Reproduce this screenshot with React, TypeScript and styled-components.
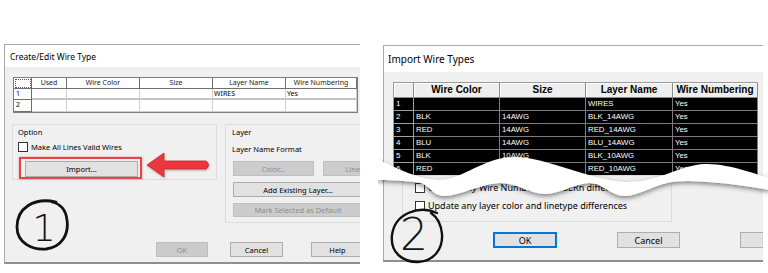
import React from "react";
import styled, { createGlobalStyle } from "styled-components";

const Global = createGlobalStyle`
  html, body { margin: 0; padding: 0; background: #ffffff; }
  body {
    width: 768px; height: 273px; overflow: hidden;
    font-family: "Noto Sans", "Open Sans", sans-serif;
    color: #000;
  }
`;

const Page = styled.div`
  position: relative;
  width: 768px;
  height: 273px;
  box-sizing: border-box;
  padding: 44px 0 0 4px;
  display: flex;
  align-items: flex-start;
  gap: 23px;
  background: #fff;
`;

/* ---------- generic dialog ---------- */
const Dialog = styled.div<{ $w: number; $h: number; $top: number }>`
  position: relative;
  width: ${(p) => p.$w}px;
  height: ${(p) => p.$h}px;
  margin-top: ${(p) => p.$top}px;
  box-sizing: border-box;
  border: 1px solid #a9a9a9;
  border-right: none;
  border-bottom: 2px solid #8f8f8f;
  background: #f0f0f0;
  overflow: hidden;
  display: flex;
  flex-direction: column;
`;

const TitleBar = styled.div<{ $h: number; $size: number; $pad: number }>`
  height: ${(p) => p.$h}px;
  flex-shrink: 0;
  background: #fff;
  display: flex;
  align-items: center;
  padding-left: ${(p) => p.$pad}px;
  font-size: ${(p) => p.$size}px;
  color: #000;
  white-space: nowrap;
`;

const Body = styled.div<{ $pad: string }>`
  display: flex;
  flex-direction: column;
  align-items: flex-start;
  padding: ${(p) => p.$pad};
  min-width: 430px;
`;

/* ---------- left table ---------- */
const LeftGrid = styled.div`
  display: grid;
  grid-template-columns: 18px 35px 73px 73px 73px 71px;
  grid-template-rows: 11px 11px 12px;
  border: 1px solid #7d7d7d;
  background: #fff;
`;

const LHead = styled.div<{ $corner?: boolean }>`
  box-sizing: border-box;
  border-right: 1px solid #6f6f6f;
  border-bottom: 1px solid #6f6f6f;
  background: #fff;
  font-size: 7px;
  line-height: 10px;
  text-align: center;
  color: #222;
  white-space: nowrap;
  overflow: hidden;
  ${(p) => (p.$corner ? "outline: 1px dotted #555; outline-offset: -2px;" : "")}
`;

const LRowHead = styled.div`
  box-sizing: border-box;
  border-right: 1px solid #6f6f6f;
  border-bottom: 1px solid #6f6f6f;
  font-size: 7px;
  line-height: 10px;
  padding-left: 2px;
  background: #fff;
`;

const LCell = styled.div<{ $thick?: boolean }>`
  box-sizing: border-box;
  border-right: 1px solid #cfcfcf;
  border-bottom: ${(p) => (p.$thick ? "2px solid #c4c4c4" : "1px solid #cfcfcf")};
  font-size: 7px;
  line-height: 10px;
  padding-left: 1px;
  white-space: nowrap;
`;

/* ---------- group boxes ---------- */
const GroupsRow = styled.div`
  display: flex;
  align-items: flex-start;
  gap: 8px;
  margin: 11px 0 0 -1px;
`;

const Group = styled.div<{ $w: number; $h: number; $pad: string; $ml?: number; $mt?: number }>`
  box-sizing: border-box;
  width: ${(p) => p.$w}px;
  height: ${(p) => p.$h}px;
  margin-left: ${(p) => p.$ml ?? 0}px;
  margin-top: ${(p) => p.$mt ?? 0}px;
  border: 1px solid #dcdcdc;
  padding: ${(p) => p.$pad};
  display: flex;
  flex-direction: column;
  align-items: flex-start;
`;

const GroupLabel = styled.div<{ $size: number }>`
  font-size: ${(p) => p.$size}px;
  line-height: 10px;
  color: #000;
  white-space: nowrap;
`;

const CheckRow = styled.label<{ $size: number; $mt: number }>`
  display: flex;
  align-items: center;
  gap: 3px;
  margin-top: ${(p) => p.$mt}px;
  font-size: ${(p) => p.$size}px;
  line-height: 10px;
  white-space: nowrap;
`;

const Box = styled.span`
  width: 10px;
  height: 10px;
  box-sizing: border-box;
  border: 1px solid #333;
  background: #fff;
  flex-shrink: 0;
`;

const Highlight = styled.div`
  margin: 5px 0 0 1px;
  width: 123px;
  height: 24px;
  box-sizing: border-box;
  border: 2px solid #e8454a;
  box-shadow: 0 0 2px rgba(232, 60, 66, 0.55);
  padding: 2px 2px 0 4px;
`;

const Button = styled.div<{
  $w: number;
  $h: number;
  $size: number;
  $disabled?: boolean;
  $focus?: boolean;
  $ml?: number;
}>`
  box-sizing: border-box;
  width: ${(p) => p.$w}px;
  height: ${(p) => p.$h}px;
  margin-left: ${(p) => p.$ml ?? 0}px;
  flex-shrink: 0;
  display: flex;
  align-items: center;
  justify-content: center;
  font-size: ${(p) => p.$size}px;
  white-space: nowrap;
  overflow: hidden;
  background: ${(p) => (p.$disabled ? "#cccccc" : "#e1e1e1")};
  color: ${(p) => (p.$disabled ? "#8d8d8d" : "#000")};
  border: 1px solid
    ${(p) => (p.$focus ? "#0078d7" : p.$disabled ? "#bfbfbf" : "#adadad")};
  ${(p) => (p.$focus ? "box-shadow: inset 0 0 0 1px #0078d7;" : "")}
`;

const FieldRow = styled.div`
  display: flex;
  align-items: center;
  margin-top: 4px;
`;

const FieldLabel = styled.div`
  width: 128px;
  font-size: 7.5px;
  white-space: nowrap;
`;

const Input = styled.div`
  width: 90px;
  height: 15px;
  box-sizing: border-box;
  border: 1px solid #7a7a7a;
  background: #fff;
`;

const BtnRow = styled.div<{ $mt: number; $pl: number; $gap: number }>`
  display: flex;
  gap: ${(p) => p.$gap}px;
  margin-top: ${(p) => p.$mt}px;
  padding-left: ${(p) => p.$pl}px;
`;

/* ---------- right table ---------- */
const RightGrid = styled.div`
  display: grid;
  grid-template-columns: 20px 86px 86px 87px 85px;
  grid-template-rows: 15px repeat(6, 13px);
  background: #000;
  border-left: 1px solid #9a9a9a;
  border-top: 1px solid #9a9a9a;
`;

const RHead = styled.div`
  box-sizing: border-box;
  background: #eeeeee;
  border-right: 1px solid #8a8a8a;
  border-bottom: 1px solid #8a8a8a;
  box-shadow: inset 1px 1px 0 #fff;
  font-family: "Liberation Sans", Arial, sans-serif;
  font-weight: bold;
  font-size: 10px;
  line-height: 13px;
  text-align: center;
  white-space: nowrap;
  overflow: hidden;
`;

const RRowHead = styled.div`
  box-sizing: border-box;
  background: #000;
  color: #fff;
  border-right: 1px solid #a0a0a0;
  border-bottom: 1px solid #a0a0a0;
  font-family: "Liberation Sans", Arial, sans-serif;
  font-size: 8px;
  line-height: 12px;
  padding-left: 2px;
`;

const RCell = styled.div`
  box-sizing: border-box;
  background: #000;
  color: #fff;
  border-right: 1px solid #7c7c7c;
  border-bottom: 1px solid #7c7c7c;
  font-family: "Liberation Sans", Arial, sans-serif;
  font-size: 7.8px;
  line-height: 12px;
  padding-left: 2px;
  white-space: nowrap;
  overflow: hidden;
`;

/* ---------- overlays ---------- */
const Overlay = styled.div<{ $x: number; $y: number; $w: number; $h: number }>`
  position: absolute;
  left: ${(p) => p.$x}px;
  top: ${(p) => p.$y}px;
  width: ${(p) => p.$w}px;
  height: ${(p) => p.$h}px;
  pointer-events: none;
`;

const Annotation = styled(Overlay)`
  display: flex;
  align-items: center;
  justify-content: center;
  & > svg {
    position: absolute;
    inset: 0;
  }
`;

const Digit = styled.span<{ $size: number; $dx: number; $dy: number }>`
  position: relative;
  left: ${(p) => p.$dx}px;
  top: ${(p) => p.$dy}px;
  font-family: "DejaVu Sans", "Liberation Sans", sans-serif;
  font-weight: 300;
  font-size: ${(p) => p.$size}px;
  line-height: 1;
  color: #141414;
`;

/* ---------- helpers ---------- */
type Pt = [number, number];
function segs(pts: Pt[]): string {
  let d = "";
  for (let i = 0; i < pts.length - 1; i++) {
    const p0 = pts[i - 1] || pts[i];
    const p1 = pts[i];
    const p2 = pts[i + 1];
    const p3 = pts[i + 2] || p2;
    const c1x = p1[0] + (p2[0] - p0[0]) / 6;
    const c1y = p1[1] + (p2[1] - p0[1]) / 6;
    const c2x = p2[0] - (p3[0] - p1[0]) / 6;
    const c2y = p2[1] - (p3[1] - p1[1]) / 6;
    d += ` C ${c1x.toFixed(1)} ${c1y.toFixed(1)}, ${c2x.toFixed(1)} ${c2y.toFixed(1)}, ${p2[0]} ${p2[1]}`;
  }
  return d;
}

const waveTop: Pt[] = [
  [0, 15], [62, 35], [137, 12], [247, 37], [327, 19], [392, 33],
];
const waveBottom: Pt[] = [
  [392, 45], [342, 38], [294, 37], [247, 51], [212, 38], [167, 49],
  [122, 38], [67, 51], [42, 38], [0, 35],
];
const wavePath =
  `M ${waveTop[0][0]} ${waveTop[0][1]}` +
  segs(waveTop) +
  ` L ${waveBottom[0][0]} ${waveBottom[0][1]}` +
  segs(waveBottom) +
  " Z";

const leftHeaders = ["", "Used", "Wire Color", "Size", "Layer Name", "Wire Numbering"];
const leftRows = [
  ["1", "", "", "", "WIRES", "Yes"],
  ["2", "", "", "", "", ""],
];

const rightHeaders = ["", "Wire Color", "Size", "Layer Name", "Wire Numbering"];
const rightRows = [
  ["1", "", "", "WIRES", "Yes"],
  ["2", "BLK", "14AWG", "BLK_14AWG", "Yes"],
  ["3", "RED", "14AWG", "RED_14AWG", "Yes"],
  ["4", "BLU", "14AWG", "BLU_14AWG", "Yes"],
  ["5", "BLK", "10AWG", "BLK_10AWG", "Yes"],
  ["6", "RED", "10AWG", "RED_10AWG", "Yes"],
];

export default function App() {
  return (
    <>
      <Global />
      <Page>
        {/* Left dialog */}
        <Dialog $w={356} $h={220} $top={0}>
          <TitleBar $h={22} $size={8.5} $pad={5}>Create/Edit Wire Type</TitleBar>
          <Body $pad="10px 0 0 8px">
            <LeftGrid>
              {leftHeaders.map((h, i) => (
                <LHead key={i} $corner={i === 0}>{h}</LHead>
              ))}
              {leftRows.map((r, ri) =>
                r.map((c, ci) =>
                  ci === 0 ? (
                    <LRowHead key={`${ri}-${ci}`}>{c}</LRowHead>
                  ) : (
                    <LCell key={`${ri}-${ci}`} $thick={ri === 0}>{c}</LCell>
                  )
                )
              )}
            </LeftGrid>
            <GroupsRow>
              <Group $w={205} $h={56} $pad="2px 0 0 5px">
                <GroupLabel $size={7.5}>Option</GroupLabel>
                <CheckRow $size={7.5} $mt={5}>
                  <Box />
                  Make All Lines Valid Wires
                </CheckRow>
                <Highlight>
                  <Button $w={113} $h={16} $size={7.5}>Import...</Button>
                </Highlight>
              </Group>
              <Group $w={200} $h={99} $pad="2px 0 0 6px">
                <GroupLabel $size={7.5}>Layer</GroupLabel>
                <FieldRow>
                  <FieldLabel>Layer Name Format</FieldLabel>
                  <Input />
                </FieldRow>
                <BtnRow $mt={5} $pl={1} $gap={9}>
                  <Button $w={81} $h={15} $size={7.5} $disabled>Color...</Button>
                  <Button $w={81} $h={15} $size={7.5} $disabled>Linetype...</Button>
                </BtnRow>
                <BtnRow $mt={6} $pl={1} $gap={0}>
                  <Button $w={130} $h={15} $size={7.5}>Add Existing Layer...</Button>
                </BtnRow>
                <BtnRow $mt={6} $pl={1} $gap={0}>
                  <Button $w={130} $h={14} $size={7.5} $disabled>Mark Selected as Default</Button>
                </BtnRow>
              </Group>
            </GroupsRow>
            <BtnRow $mt={19} $pl={143} $gap={22}>
              <Button $w={52} $h={15} $size={7.5} $disabled>OK</Button>
              <Button $w={53} $h={15} $size={7.5}>Cancel</Button>
              <Button $w={53} $h={15} $size={7.5} $ml={6}>Help</Button>
            </BtnRow>
          </Body>
        </Dialog>

        {/* Right dialog */}
        <Dialog $w={380} $h={217} $top={1}>
          <TitleBar $h={26} $size={10} $pad={4}>Import Wire Types</TitleBar>
          <Body $pad="10px 0 0 9px">
            <RightGrid>
              {rightHeaders.map((h, i) => (
                <RHead key={i}>{h}</RHead>
              ))}
              {rightRows.map((r, ri) =>
                r.map((c, ci) =>
                  ci === 0 ? (
                    <RRowHead key={`${ri}-${ci}`}>{c}</RRowHead>
                  ) : (
                    <RCell key={`${ri}-${ci}`}>{c}</RCell>
                  )
                )
              )}
            </RightGrid>
            <Group $w={270} $h={47} $pad="7px 0 0 12px" $ml={9} $mt={-1}>
              <CheckRow $size={9} $mt={0}>
                <Box />
                Update any Wire Number and USERn differences
              </CheckRow>
              <CheckRow $size={9} $mt={8}>
                <Box />
                Update any layer color and linetype differences
              </CheckRow>
            </Group>
            <BtnRow $mt={10} $pl={100} $gap={60}>
              <Button $w={64} $h={16} $size={9} $focus>OK</Button>
              <Button $w={63} $h={16} $size={9}>Cancel</Button>
              <Button $w={64} $h={16} $size={9}>Help</Button>
            </BtnRow>
          </Body>
        </Dialog>

        {/* torn wave across right dialog */}
        <Overlay $x={378} $y={145} $w={392} $h={62}>
          <svg width="392" height="62" viewBox="0 0 392 62">
            <defs>
              <filter id="wshadow" x="-5%" y="-40%" width="110%" height="180%">
                <feDropShadow dx="0" dy="2" stdDeviation="2.4" floodColor="#000" floodOpacity="0.5" />
              </filter>
            </defs>
            <path d={wavePath} fill="#ffffff" filter="url(#wshadow)" />
          </svg>
        </Overlay>

        {/* red arrow */}
        <Overlay $x={140} $y={148} $w={75} $h={34}>
          <svg width="75" height="34" viewBox="0 0 75 34">
            <defs>
              <filter id="ashadow" x="-20%" y="-30%" width="140%" height="160%">
                <feDropShadow dx="0.5" dy="1" stdDeviation="1" floodColor="#000" floodOpacity="0.3" />
              </filter>
            </defs>
            <path
              d="M 7 17 L 24 5 L 24 13 L 66 13 Q 71 17 66 21 L 24 21 L 24 29 Z"
              fill="#e9383d"
              stroke="#c9262b"
              strokeWidth="0.8"
              strokeLinejoin="round"
              filter="url(#ashadow)"
            />
          </svg>
        </Overlay>

        {/* circled 1 */}
        <Annotation $x={12} $y={198} $w={60} $h={56}>
          <svg width="60" height="56" viewBox="0 0 60 56">
            <path
              d="M 44 4 C 22 -1, 5 10, 5 29 C 5 45, 20 52, 34 51 C 50 49, 57 36, 55 22 C 54 13, 49 6, 40 4"
              fill="none"
              stroke="#111"
              strokeWidth="2.8"
              strokeLinecap="round"
            />
          </svg>
          <Digit $size={37} $dx={2} $dy={2}>1</Digit>
        </Annotation>

        {/* circled 2 */}
        <Annotation $x={387} $y={207} $w={60} $h={58}>
          <svg width="60" height="58" viewBox="0 0 60 58">
            <path
              d="M 50 6 C 32 -2, 8 6, 5 28 C 3 46, 16 55, 31 55 C 47 54, 56 42, 55 27 C 54 17, 50 10, 44 6"
              fill="none"
              stroke="#111"
              strokeWidth="2.4"
              strokeLinecap="round"
            />
          </svg>
          <Digit $size={44} $dx={-3} $dy={-1}>2</Digit>
        </Annotation>
      </Page>
    </>
  );
}
